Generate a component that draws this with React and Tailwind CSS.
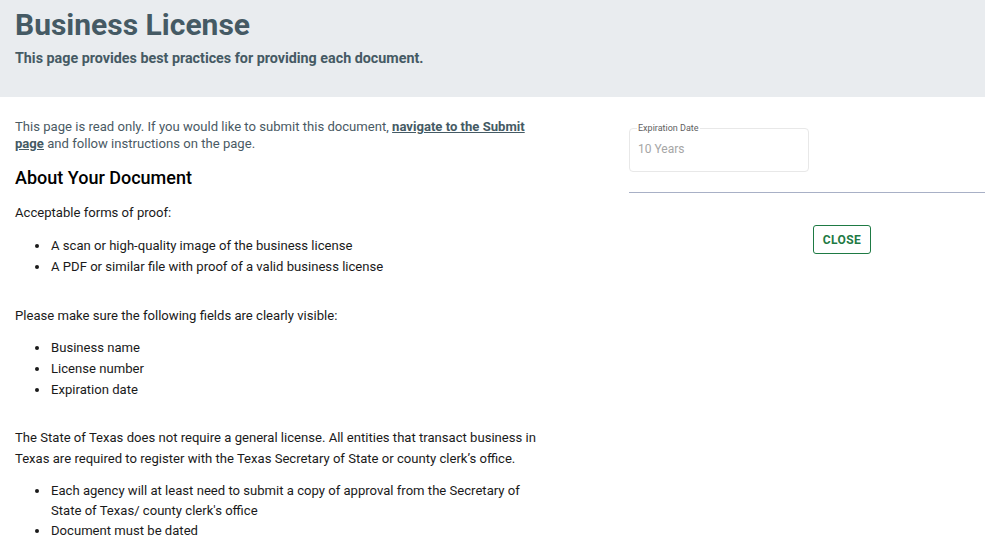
import React from 'react';

const Bullets = ({ items, className = '' }) => (
    <ul className={`list-disc pl-[35px] ${className}`}>
        {items.map((item, i) => (
            <li key={i} className="pl-[1px]">{item}</li>
        ))}
    </ul>
);

const App = () => {
    return (
        <div className="min-h-screen bg-white font-['Roboto',sans-serif]">
            <header className="h-[97px] bg-[#e9ecef] px-[15px] pt-[4px]">
                <h1 className="text-[30px] leading-[42px] font-bold text-[#455a64]">Business License</h1>
                <p className="mt-[3px] text-[14.3px] leading-[18px] font-bold text-[#455a64]">
                    This page provides best practices for providing each document.
                </p>
            </header>

            <div className="flex">
                <main className="w-[545px] pl-[15px] pt-[21px] text-[13.1px] leading-[21px] text-[#1a1a1a]">
                    <p className="leading-[17px] text-[#4a5a64]">
                        This page is read only. If you would like to submit this document,{' '}
                        <a href="#" className="font-bold underline text-[#455a64]">navigate to the Submit page</a>{' '}
                        and follow instructions on the page.
                    </p>
                    <h2 className="mt-[14px] text-[18px] leading-[24px] font-medium text-black">About Your Document</h2>
                    <p className="mt-[12px]">Acceptable forms of proof:</p>
                    <Bullets
                        className="mt-[12px]"
                        items={[
                            'A scan or high-quality image of the business license',
                            'A PDF or similar file with proof of a valid business license',
                        ]}
                    />
                    <p className="mt-[28px]">Please make sure the following fields are clearly visible:</p>
                    <Bullets
                        className="mt-[11px]"
                        items={['Business name', 'License number', 'Expiration date']}
                    />
                    <p className="mt-[27px]">
                        The State of Texas does not require a general license. All entities that transact business in
                        Texas are required to register with the Texas Secretary of State or county clerk’s office.
                    </p>
                    <Bullets
                        className="mt-[12px] leading-[20px]"
                        items={[
                            "Each agency will at least need to submit a copy of approval from the Secretary of State of Texas/ county clerk's office",
                            'Document must be dated',
                        ]}
                    />
                </main>

                <aside className="ml-auto w-[356px] pt-[25px]">
                    <fieldset className="w-[180px] rounded-[4px] border border-[#e8e8e8] px-[8px] pb-[14px]">
                        <legend className="px-[1px] -ml-[1px] text-[9px] leading-[12px] text-[#616161]">Expiration Date</legend>
                        <div className="pt-[7px] text-[12px] leading-[16px] text-[#a6a6a6]">10 Years</div>
                    </fieldset>
                    <div className="mt-[20px] h-px bg-[#a8b0c6]" />
                    <button className="ml-[184px] mt-[32px] h-[29px] w-[58px] rounded-[3px] border border-[#1e7a44] text-[12px] font-bold tracking-[0.4px] text-[#1e7a44]">
                        CLOSE
                    </button>
                </aside>
            </div>
        </div>
    );
};

export default App;
